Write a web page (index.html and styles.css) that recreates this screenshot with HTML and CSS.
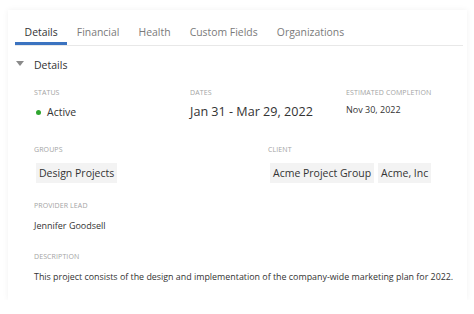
FILE: index.html
```html
<!DOCTYPE html>
<html>
<head>
<meta charset="utf-8">
<link rel="stylesheet" href="styles.css">
</head>
<body>
<div class="card">
  <nav class="tabs">
    <span class="tab active">Details</span>
    <span class="tab">Financial</span>
    <span class="tab">Health</span>
    <span class="tab">Custom Fields</span>
    <span class="tab">Organizations</span>
  </nav>
  <div class="section-head">
    <svg class="caret" width="8" height="5" viewBox="0 0 8 5"><polygon points="0,0 8,0 4,5" fill="#8a8a8a"/></svg>
    <span class="section-title">Details</span>
  </div>
  <div class="content">
    <div class="row row-three">
      <div class="field">
        <div class="label">Status</div>
        <div class="value status"><span class="dot"></span>Active</div>
      </div>
      <div class="field">
        <div class="label">Dates</div>
        <div class="value dates">Jan 31 - Mar 29, 2022</div>
      </div>
      <div class="field">
        <div class="label">Estimated Completion</div>
        <div class="value small">Nov 30, 2022</div>
      </div>
    </div>
    <div class="row row-two">
      <div class="field">
        <div class="label">Groups</div>
        <div class="chips"><span class="chip">Design Projects</span></div>
      </div>
      <div class="field">
        <div class="label">Client</div>
        <div class="chips"><span class="chip">Acme Project Group</span><span class="chip">Acme, Inc</span></div>
      </div>
    </div>
    <div class="row row-lead">
      <div class="field">
        <div class="label">Provider Lead</div>
        <div class="value small">Jennifer Goodsell</div>
      </div>
    </div>
    <div class="row row-desc">
      <div class="field">
        <div class="label">Description</div>
        <div class="value small desc">This project consists of the design and implementation of the company-wide marketing plan for 2022.</div>
      </div>
    </div>
  </div>
</div>
</body>
</html>
```

FILE: styles.css
```css
* { box-sizing: border-box; }
html, body { margin: 0; padding: 0; background: #ffffff; }
body {
  font-family: "Open Sans", "Liberation Sans", sans-serif;
  color: #333333;
  padding: 10px 7px 0 8px;
}
.card {
  background: #ffffff;
  height: 290px;
  box-shadow: 0 0 6px rgba(0, 0, 0, 0.06);
  padding-top: 14px;
}
.tabs {
  display: flex;
  margin: 0 4px 0 7px;
  border-bottom: 1px solid #e8e8e8;
}
.tab {
  font-size: 10.4px;
  line-height: 16px;
  padding: 0 9.6px 2px;
  color: #7a7a7a;
  border-bottom: 3px solid transparent;
}
.tab.active {
  color: #333333;
  border-bottom-color: #3b73c0;
}
.section-head {
  display: flex;
  align-items: center;
  margin-top: 11px;
  height: 16px;
  padding-left: 8px;
}
.caret { margin-top: -4px; }
.section-title {
  font-size: 10.5px;
  line-height: 16px;
  margin-left: 10px;
  color: #333333;
}
.content { padding-left: 26px; }
.row { display: grid; }
.row-three { grid-template-columns: 156px 156px 1fr; margin-top: 15px; }
.row-two { grid-template-columns: 234px 1fr; margin-top: 24px; }
.row-lead { margin-top: 18px; }
.row-desc { margin-top: 19px; }
.label {
  font-size: 7px;
  line-height: 10px;
  text-transform: uppercase;
  color: #a3a3a3;
  letter-spacing: 0.1px;
}
.value {
  font-size: 10.5px;
  line-height: 18px;
  margin-top: 5px;
  color: #333333;
}
.value.dates { font-size: 12.6px; }
.value.small { font-size: 9px; line-height: 14px; }
.value.desc { font-size: 8.88px; }
.row-lead .value, .row-desc .value { margin-top: 8px; }
.status { display: flex; align-items: center; }
.dot {
  width: 5px;
  height: 5px;
  border-radius: 50%;
  background: #2fa52f;
  margin: 0 6px 0 2px;
}
.chips { display: flex; margin-top: 8px; }
.chip {
  font-size: 10.5px;
  line-height: 20px;
  height: 20px;
  padding: 0 3px;
  margin: 0 2px;
  background: #f3f3f3;
  color: #333333;
}
```
